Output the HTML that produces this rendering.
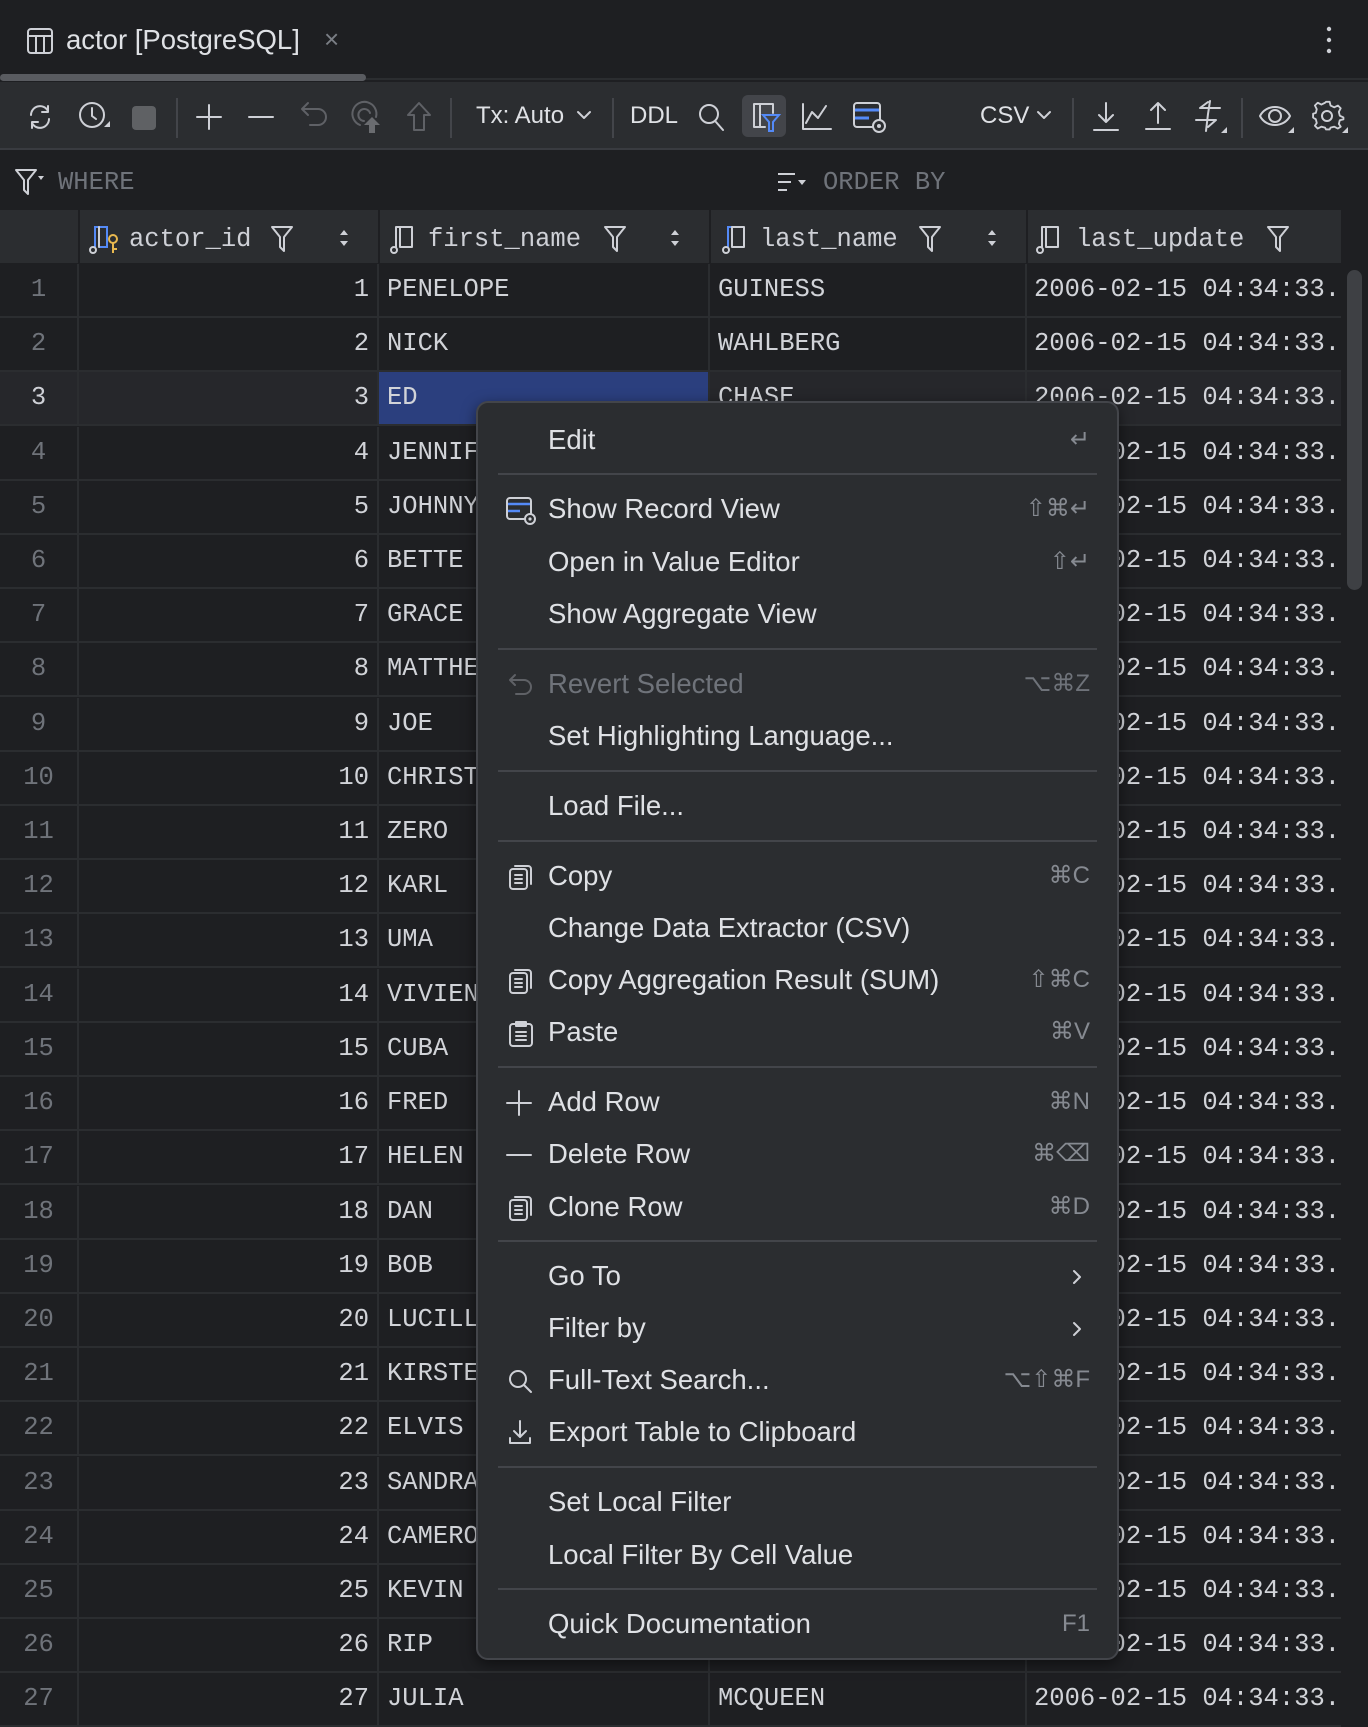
<!DOCTYPE html>
<html><head><meta charset="utf-8"><style>
*{margin:0;padding:0;box-sizing:border-box}
body{width:1368px;height:1710px;background:#1e1f22;position:relative;overflow:hidden;font-family:"Liberation Sans",sans-serif;color:#dfe1e5}
.abs{position:absolute}
.mono{font-family:"Liberation Mono",monospace}
svg{position:absolute;overflow:visible}
.ic{fill:none;stroke:#ced0d6;stroke-width:2;stroke-linecap:round;stroke-linejoin:round}
.dim{stroke:#5f6166}
.row{position:absolute;left:0;width:1341px;height:54px;border-bottom:2px solid #2b2d30;font-family:"Liberation Mono",monospace;font-size:25.5px;line-height:52px;color:#d1d3d8}
.row div{position:absolute;top:0;height:52px;white-space:nowrap;overflow:hidden}
.c0{left:0;width:79px;text-align:center;color:#6f737a;border-right:2px solid #2b2d30}
.c1{left:79px;width:300px;text-align:right;padding-right:8px;border-right:2px solid #2b2d30}
.c2{left:379px;width:331px;padding-left:8px;border-right:2px solid #2b2d30}
.c3{left:710px;width:317px;padding-left:8px;border-right:2px solid #2b2d30}
.c4{left:1027px;width:314px;padding-left:7px}
.sel{background:#2b3f7e}
.hl{background:#26272b}
.mi{position:absolute;left:0;width:100%;height:40px;line-height:40px;font-size:27.5px;color:#dfe1e5}
.mi .t{position:absolute;left:70px}
.mi .k{position:absolute;right:27px;color:#868a91;font-size:24px}
.sep{position:absolute;left:20px;right:20px;height:2px;background:#43454a}
.gray{color:#6f737a!important}
.div{position:absolute;top:98px;width:2px;height:40px;background:#43454a}
</style></head><body>

<div class="abs" style="left:0;top:0;width:1368px;height:80px;background:#1e1f22;border-bottom:2px solid #2b2d30"></div>
<svg style="left:27px;top:28px" width="26" height="26"><rect class="ic" x="1" y="1" width="24" height="24" rx="3"/><path class="ic" d="M1 8H25M9 8V25M17 8V25"/></svg>
<div class="abs" style="left:66px;top:22px;font-size:27.5px;line-height:36px;color:#dfe1e5">actor [PostgreSQL]</div>
<div class="abs" style="left:324px;top:24px;font-size:26px;color:#7a7e85">×</div>
<svg style="left:1326px;top:26px" width="6" height="28"><circle cx="3" cy="3" r="2.2" fill="#ced0d6"/><circle cx="3" cy="14" r="2.2" fill="#ced0d6"/><circle cx="3" cy="25" r="2.2" fill="#ced0d6"/></svg>
<div class="abs" style="left:0;top:74px;width:366px;height:7px;border-radius:4px;background:#595b60"></div>

<div class="abs" style="left:0;top:82px;width:1368px;height:68px;background:#2b2d30;border-bottom:2px solid #393b40"></div>
<svg style="left:26px;top:103px" width="28" height="28"><path class="ic" d="M5 12A9 9 0 0 1 22 8M23 16A9 9 0 0 1 6 20M22 3V9H16M6 25V19H12"/></svg>
<svg style="left:78px;top:101px" width="34" height="32"><circle class="ic" cx="14" cy="14" r="12"/><path class="ic" d="M14 7V15L18 18"/><path d="M26 26H32V20Z" fill="#ced0d6"/></svg>
<div class="abs" style="left:132px;top:106px;width:24px;height:24px;border-radius:4px;background:#5f6164"></div>
<div class="div" style="left:176px"></div>
<svg style="left:196px;top:104px" width="26" height="26"><path class="ic" d="M13 1V25M1 13H25"/></svg>
<svg style="left:248px;top:104px" width="26" height="26"><path class="ic" d="M1 13H25"/></svg>
<svg style="left:300px;top:101px" width="30" height="30"><path class="ic dim" d="M3 8H18A8 8 0 0 1 18 24H10M8 2L2 8L8 14"/></svg>
<svg style="left:350px;top:101px" width="34" height="32"><path class="ic dim" d="M10 24A12 12 0 1 1 26 16M14 20A6 6 0 1 1 20 12"/><path d="M22 16L30 24H25V32H19V24H14Z" fill="#6a6c70"/></svg>
<svg style="left:405px;top:101px" width="28" height="32"><path class="ic dim" d="M14 2L3 14H9V29H19V14H25Z"/></svg>
<div class="div" style="left:450px"></div>
<div class="abs" style="left:476px;top:101px;font-size:24px;line-height:30px;color:#dfe1e5">Tx: Auto</div>
<svg style="left:576px;top:110px" width="16" height="10"><path class="ic" d="M2 2L8 8L14 2"/></svg>
<div class="div" style="left:612px"></div>
<div class="abs" style="left:630px;top:101px;font-size:24px;line-height:30px">DDL</div>
<svg style="left:698px;top:102px" width="28" height="30"><circle class="ic" cx="11" cy="12" r="9"/><path class="ic" d="M18 20L25 28"/></svg>
<div class="abs" style="left:742px;top:95px;width:44px;height:42px;border-radius:6px;background:#43454a"></div>
<svg style="left:751px;top:103px" width="30" height="30"><path class="ic" d="M14 24H3V1H22V10M9 1V24"/><path d="M12 12H28L22 19V28H18V19Z" fill="none" stroke="#548af7" stroke-width="2"/></svg>
<svg style="left:802px;top:103px" width="30" height="28"><path class="ic" d="M1 1V26H29M4 20L10 9L16 15L24 3"/></svg>
<svg style="left:853px;top:102px" width="34" height="32"><rect class="ic" x="1" y="1" width="26" height="24" rx="3"/><path d="M2 8H26" stroke="#548af7" stroke-width="3"/><path d="M2 16H16" stroke="#548af7" stroke-width="3"/><circle class="ic" cx="26" cy="24" r="6" style="fill:#2b2d30"/><circle cx="26" cy="24" r="2" fill="#ced0d6"/></svg>
<div class="abs" style="left:980px;top:101px;font-size:24px;line-height:30px">CSV</div>
<svg style="left:1036px;top:110px" width="16" height="10"><path class="ic" d="M2 2L8 8L14 2"/></svg>
<div class="div" style="left:1072px"></div>
<svg style="left:1092px;top:102px" width="28" height="30"><path class="ic" d="M14 1V20M7 13L14 20L21 13M2 28H26"/></svg>
<svg style="left:1144px;top:101px" width="28" height="30"><path class="ic" d="M14 22V2M7 9L14 2L21 9M2 28H26"/></svg>
<svg style="left:1194px;top:100px" width="34" height="34"><path class="ic" d="M14 2L6 8H26M2 20H22L14 27M16 1L14 14M14 14L12 31"/><path d="M27 33H33V27Z" fill="#ced0d6"/></svg>
<div class="div" style="left:1241px"></div>
<svg style="left:1258px;top:102px" width="36" height="32"><path class="ic" d="M2 14C8 2 26 2 32 14C26 26 8 26 2 14Z"/><circle class="ic" cx="17" cy="14" r="6"/><path d="M30 31H36V25Z" fill="#ced0d6"/></svg>
<svg style="left:1312px;top:100px" width="36" height="34"><circle class="ic" cx="15" cy="16" r="5"/><path class="ic" d="M13 2H17L18 6L22 8L26 6L29 9L27 13L28 17L32 19V21L28 22L27 26L29 29L26 31L22 29L18 30L17 32H13L12 30L8 29L4 31L1 28L3 25L2 21L-1 19V15L2 14L3 10L1 6L4 3L8 5L12 3Z" transform="translate(2 0) scale(0.92)"/><path d="M30 33H36V27Z" fill="#ced0d6"/></svg>

<svg style="left:14px;top:168px" width="30" height="28"><path class="ic" d="M2 2H22L14 12V26L10 22V12Z"/><path d="M24 8H30L27 12Z" fill="#ced0d6"/></svg>
<div class="abs mono" style="left:58px;top:168px;font-size:25.5px;line-height:30px;color:#6f737a">WHERE</div>
<svg style="left:777px;top:172px" width="32" height="22"><path d="M1 2H18M1 10H14M1 18H10" stroke="#ced0d6" stroke-width="2"/><path d="M21 8H29L25 13Z" fill="#ced0d6"/></svg>
<div class="abs mono" style="left:823px;top:168px;font-size:25.5px;line-height:30px;color:#6f737a">ORDER BY</div>

<div class="abs" style="left:0;top:210px;width:1341px;height:53px;background:#2b2d30"></div>
<div class="abs" style="left:78px;top:210px;width:2px;height:53px;background:#1e1f22"></div>
<div class="abs" style="left:378px;top:210px;width:2px;height:53px;background:#1e1f22"></div>
<div class="abs" style="left:709px;top:210px;width:2px;height:53px;background:#1e1f22"></div>
<div class="abs" style="left:1026px;top:210px;width:2px;height:53px;background:#1e1f22"></div>
<svg style="left:89px;top:225px" width="32" height="30"><path d="M6 22V2H18V22H10" fill="none" stroke="#548af7" stroke-width="2"/><path class="ic" d="M10 2V22"/><circle class="ic" cx="4" cy="25" r="3"/><circle cx="24" cy="14" r="4" fill="none" stroke="#e8b84f" stroke-width="2"/><path d="M24 18V28M24 24H28" stroke="#e8b84f" stroke-width="2"/></svg>
<svg style="left:390px;top:225px" width="28" height="30"><path class="ic" d="M6 22V2H22V22H10M10 2V22"/><circle class="ic" cx="4" cy="25" r="3"/></svg>
<svg style="left:722px;top:225px" width="28" height="30"><path d="M6 22V2H10" fill="none" stroke="#548af7" stroke-width="2"/><path class="ic" d="M10 2H22V22H10M10 2V22"/><circle class="ic" cx="4" cy="25" r="3"/></svg>
<svg style="left:1036px;top:225px" width="28" height="30"><path class="ic" d="M6 22V2H22V22H10M10 2V22"/><circle class="ic" cx="4" cy="25" r="3"/></svg>
<div class="abs mono" style="left:129px;top:225px;font-size:25.5px;line-height:30px;color:#ced0d6">actor_id</div>
<div class="abs mono" style="left:428px;top:225px;font-size:25.5px;line-height:30px;color:#ced0d6">first_name</div>
<div class="abs mono" style="left:760px;top:225px;font-size:25.5px;line-height:30px;color:#ced0d6">last_name</div>
<div class="abs mono" style="left:1076px;top:225px;font-size:25.5px;line-height:30px;color:#ced0d6">last_update</div>
<svg style="left:270px;top:225px" width="24" height="28"><path class="ic" d="M2 2H22L14 12V26L10 22V12Z"/></svg>
<svg style="left:603px;top:225px" width="24" height="28"><path class="ic" d="M2 2H22L14 12V26L10 22V12Z"/></svg>
<svg style="left:918px;top:225px" width="24" height="28"><path class="ic" d="M2 2H22L14 12V26L10 22V12Z"/></svg>
<svg style="left:1266px;top:225px" width="24" height="28"><path class="ic" d="M2 2H22L14 12V26L10 22V12Z"/></svg>
<svg style="left:339px;top:229px" width="10" height="18"><path d="M1 6L5 1L9 6ZM1 12L5 17L9 12Z" fill="#ced0d6"/></svg>
<svg style="left:670px;top:229px" width="10" height="18"><path d="M1 6L5 1L9 6ZM1 12L5 17L9 12Z" fill="#ced0d6"/></svg>
<svg style="left:987px;top:229px" width="10" height="18"><path d="M1 6L5 1L9 6ZM1 12L5 17L9 12Z" fill="#ced0d6"/></svg>

<div class="row" style="top:264px"><div class="c0">1</div><div class="c1">1</div><div class="c2">PENELOPE</div><div class="c3">GUINESS</div><div class="c4">2006-02-15 04:34:33.</div></div>
<div class="row" style="top:318px"><div class="c0">2</div><div class="c1">2</div><div class="c2">NICK</div><div class="c3">WAHLBERG</div><div class="c4">2006-02-15 04:34:33.</div></div>
<div class="row hl" style="top:372px"><div class="c0" style="color:#ced0d6">3</div><div class="c1">3</div><div class="c2 sel">ED</div><div class="c3">CHASE</div><div class="c4">2006-02-15 04:34:33.</div></div>
<div class="row" style="top:427px"><div class="c0">4</div><div class="c1">4</div><div class="c2">JENNIFER</div><div class="c3">DAVIS</div><div class="c4">2006-02-15 04:34:33.</div></div>
<div class="row" style="top:481px"><div class="c0">5</div><div class="c1">5</div><div class="c2">JOHNNY</div><div class="c3">LOLLOBRIGIDA</div><div class="c4">2006-02-15 04:34:33.</div></div>
<div class="row" style="top:535px"><div class="c0">6</div><div class="c1">6</div><div class="c2">BETTE</div><div class="c3">NICHOLSON</div><div class="c4">2006-02-15 04:34:33.</div></div>
<div class="row" style="top:589px"><div class="c0">7</div><div class="c1">7</div><div class="c2">GRACE</div><div class="c3">MOSTEL</div><div class="c4">2006-02-15 04:34:33.</div></div>
<div class="row" style="top:643px"><div class="c0">8</div><div class="c1">8</div><div class="c2">MATTHEW</div><div class="c3">JOHANSSON</div><div class="c4">2006-02-15 04:34:33.</div></div>
<div class="row" style="top:698px"><div class="c0">9</div><div class="c1">9</div><div class="c2">JOE</div><div class="c3">SWANK</div><div class="c4">2006-02-15 04:34:33.</div></div>
<div class="row" style="top:752px"><div class="c0">10</div><div class="c1">10</div><div class="c2">CHRISTIAN</div><div class="c3">GABLE</div><div class="c4">2006-02-15 04:34:33.</div></div>
<div class="row" style="top:806px"><div class="c0">11</div><div class="c1">11</div><div class="c2">ZERO</div><div class="c3">CAGE</div><div class="c4">2006-02-15 04:34:33.</div></div>
<div class="row" style="top:860px"><div class="c0">12</div><div class="c1">12</div><div class="c2">KARL</div><div class="c3">BERRY</div><div class="c4">2006-02-15 04:34:33.</div></div>
<div class="row" style="top:914px"><div class="c0">13</div><div class="c1">13</div><div class="c2">UMA</div><div class="c3">WOOD</div><div class="c4">2006-02-15 04:34:33.</div></div>
<div class="row" style="top:969px"><div class="c0">14</div><div class="c1">14</div><div class="c2">VIVIEN</div><div class="c3">BERGEN</div><div class="c4">2006-02-15 04:34:33.</div></div>
<div class="row" style="top:1023px"><div class="c0">15</div><div class="c1">15</div><div class="c2">CUBA</div><div class="c3">OLIVIER</div><div class="c4">2006-02-15 04:34:33.</div></div>
<div class="row" style="top:1077px"><div class="c0">16</div><div class="c1">16</div><div class="c2">FRED</div><div class="c3">COSTNER</div><div class="c4">2006-02-15 04:34:33.</div></div>
<div class="row" style="top:1131px"><div class="c0">17</div><div class="c1">17</div><div class="c2">HELEN</div><div class="c3">VOIGHT</div><div class="c4">2006-02-15 04:34:33.</div></div>
<div class="row" style="top:1186px"><div class="c0">18</div><div class="c1">18</div><div class="c2">DAN</div><div class="c3">TORN</div><div class="c4">2006-02-15 04:34:33.</div></div>
<div class="row" style="top:1240px"><div class="c0">19</div><div class="c1">19</div><div class="c2">BOB</div><div class="c3">FAWCETT</div><div class="c4">2006-02-15 04:34:33.</div></div>
<div class="row" style="top:1294px"><div class="c0">20</div><div class="c1">20</div><div class="c2">LUCILLE</div><div class="c3">TRACY</div><div class="c4">2006-02-15 04:34:33.</div></div>
<div class="row" style="top:1348px"><div class="c0">21</div><div class="c1">21</div><div class="c2">KIRSTEN</div><div class="c3">PALTROW</div><div class="c4">2006-02-15 04:34:33.</div></div>
<div class="row" style="top:1402px"><div class="c0">22</div><div class="c1">22</div><div class="c2">ELVIS</div><div class="c3">MARX</div><div class="c4">2006-02-15 04:34:33.</div></div>
<div class="row" style="top:1457px"><div class="c0">23</div><div class="c1">23</div><div class="c2">SANDRA</div><div class="c3">KILMER</div><div class="c4">2006-02-15 04:34:33.</div></div>
<div class="row" style="top:1511px"><div class="c0">24</div><div class="c1">24</div><div class="c2">CAMERON</div><div class="c3">STREEP</div><div class="c4">2006-02-15 04:34:33.</div></div>
<div class="row" style="top:1565px"><div class="c0">25</div><div class="c1">25</div><div class="c2">KEVIN</div><div class="c3">BLOOM</div><div class="c4">2006-02-15 04:34:33.</div></div>
<div class="row" style="top:1619px"><div class="c0">26</div><div class="c1">26</div><div class="c2">RIP</div><div class="c3">CRAWFORD</div><div class="c4">2006-02-15 04:34:33.</div></div>
<div class="row" style="top:1673px"><div class="c0">27</div><div class="c1">27</div><div class="c2">JULIA</div><div class="c3">MCQUEEN</div><div class="c4">2006-02-15 04:34:33.</div></div>

<div class="abs" style="left:1341px;top:263px;width:27px;height:1447px;background:#1e1f22"></div>
<div class="abs" style="left:1347px;top:270px;width:15px;height:320px;border-radius:8px;background:#3e4044"></div>

<div class="abs" style="left:476px;top:401px;width:643px;height:1259px;background:#2b2d30;border:2px solid #43454a;border-radius:12px;box-shadow:0 4px 14px rgba(0,0,0,.5)">
<div class="mi" style="top:17px"><span class="t">Edit</span><span class="k">↵</span></div>
<div class="sep" style="top:70px"></div>
<div class="mi" style="top:86px"><svg style="left:28px;top:8px" width="32" height="28"><rect class="ic" x="1" y="1" width="24" height="21" rx="3"/><path d="M2 7H24M2 14H14" stroke="#548af7" stroke-width="2.5"/><circle class="ic" cx="24" cy="22" r="5" style="fill:#2b2d30"/><circle cx="24" cy="22" r="1.6" fill="#ced0d6"/></svg><span class="t">Show Record View</span><span class="k">⇧⌘↵</span></div>
<div class="mi" style="top:139px"><span class="t">Open in Value Editor</span><span class="k">⇧↵</span></div>
<div class="mi" style="top:191px"><span class="t">Show Aggregate View</span></div>
<div class="sep" style="top:245px"></div>
<div class="mi" style="top:261px;color:#6f737a"><svg style="left:30px;top:8px" width="28" height="26"><path class="ic dim" d="M3 8H16A7 7 0 0 1 16 22H8M7 3L2 8L7 13"/></svg><span class="t">Revert Selected</span><span class="k gray">⌥⌘Z</span></div>
<div class="mi" style="top:313px"><span class="t">Set Highlighting Language...</span></div>
<div class="sep" style="top:367px"></div>
<div class="mi" style="top:383px"><span class="t">Load File...</span></div>
<div class="sep" style="top:437px"></div>
<div class="mi" style="top:453px"><svg style="left:31px;top:9px" width="24" height="26"><rect class="ic" x="1" y="4" width="17" height="20" rx="3"/><path class="ic" d="M6 1H19A3 3 0 0 1 22 4V19M6 10H13M6 14H13M6 18H13"/></svg><span class="t">Copy</span><span class="k">⌘C</span></div>
<div class="mi" style="top:505px"><span class="t">Change Data Extractor (CSV)</span></div>
<div class="mi" style="top:557px"><svg style="left:31px;top:9px" width="24" height="26"><rect class="ic" x="1" y="4" width="17" height="20" rx="3"/><path class="ic" d="M6 1H19A3 3 0 0 1 22 4V19M6 10H13M6 14H13M6 18H13"/></svg><span class="t">Copy Aggregation Result (SUM)</span><span class="k">⇧⌘C</span></div>
<div class="mi" style="top:609px"><svg style="left:31px;top:8px" width="24" height="28"><rect class="ic" x="1" y="4" width="22" height="22" rx="3"/><path class="ic" d="M7 2H17V6H7ZM7 12H17M7 16H17M7 20H17"/></svg><span class="t">Paste</span><span class="k">⌘V</span></div>
<div class="sep" style="top:663px"></div>
<div class="mi" style="top:679px"><svg style="left:28px;top:8px" width="26" height="26"><path class="ic" d="M13 1V25M1 13H25"/></svg><span class="t">Add Row</span><span class="k">⌘N</span></div>
<div class="mi" style="top:731px"><svg style="left:28px;top:8px" width="26" height="26"><path class="ic" d="M1 13H25"/></svg><span class="t">Delete Row</span><span class="k">⌘⌫</span></div>
<div class="mi" style="top:784px"><svg style="left:31px;top:9px" width="24" height="26"><rect class="ic" x="1" y="4" width="17" height="20" rx="3"/><path class="ic" d="M6 1H19A3 3 0 0 1 22 4V19M6 10H13M6 14H13M6 18H13"/></svg><span class="t">Clone Row</span><span class="k">⌘D</span></div>
<div class="sep" style="top:837px"></div>
<div class="mi" style="top:853px"><span class="t">Go To</span><svg style="left:594px;top:13px" width="10" height="16"><path class="ic" d="M2 2L8 8L2 14"/></svg></div>
<div class="mi" style="top:905px"><span class="t">Filter by</span><svg style="left:594px;top:13px" width="10" height="16"><path class="ic" d="M2 2L8 8L2 14"/></svg></div>
<div class="mi" style="top:957px"><svg style="left:30px;top:9px" width="26" height="26"><circle class="ic" cx="10" cy="10" r="8"/><path class="ic" d="M16 16L23 23"/></svg><span class="t">Full-Text Search...</span><span class="k">⌥⇧⌘F</span></div>
<div class="mi" style="top:1009px"><svg style="left:30px;top:8px" width="26" height="26"><path class="ic" d="M12 1V17M6 11L12 17L18 11M2 18V23H22V18"/></svg><span class="t">Export Table to Clipboard</span></div>
<div class="sep" style="top:1063px"></div>
<div class="mi" style="top:1079px"><span class="t">Set Local Filter</span></div>
<div class="mi" style="top:1132px"><span class="t">Local Filter By Cell Value</span></div>
<div class="sep" style="top:1185px"></div>
<div class="mi" style="top:1201px"><span class="t">Quick Documentation</span><span class="k">F1</span></div>
</div>
</body></html>
